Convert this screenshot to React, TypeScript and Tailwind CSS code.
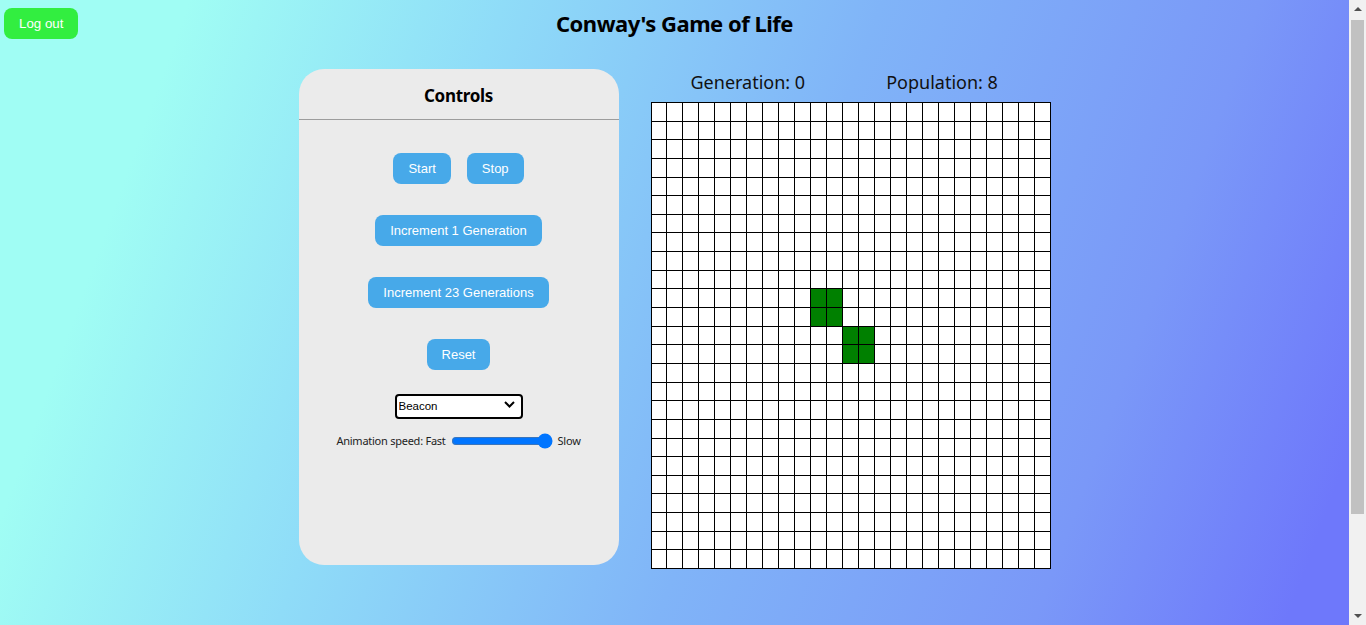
const ALIVE = new Set(["10-10", "10-11", "11-10", "11-11", "12-12", "12-13", "13-12", "13-13"]);
const SIZE = 25;

const ui = "font-['Noto_Sans',sans-serif]";
const btn =
  "font-['Liberation_Sans',Arial,sans-serif] text-[13px] leading-[15px] text-white rounded-lg px-[15px] py-2 bg-[#47a9e9]";

export default function App() {
  return (
    <div className="flex h-[625px] overflow-hidden">
      <div
        className={`flex-1 bg-[linear-gradient(110deg,#a0fdf4_12%,#8fdcf8_32%,#80b4f8_56%,#7a98f8_80%,#6e78fb_96%)] text-black ${ui}`}
      >
        <div className="grid grid-cols-[1fr_auto_1fr] items-start">
          <div>
            <button className="mt-2 ml-1 rounded-lg bg-[#32ee40] px-[15px] py-2 font-['Liberation_Sans',Arial,sans-serif] text-[13.333px] leading-[15px] text-white">
              Log out
            </button>
          </div>
          <h1 className="mt-[7px] text-[22px] font-bold leading-[32px] tracking-[-0.5px]">
            Conway's Game of Life
          </h1>
          <div />
        </div>

        <div className="mt-[30px] flex justify-center gap-8">
          <Controls />
          <Board />
        </div>
      </div>
      <Scrollbar />
    </div>
  );
}

function Controls() {
  return (
    <div className="flex h-[496px] w-[320px] flex-col rounded-[25px] bg-[#ebebeb]">
      <div className="flex h-[50px] items-center justify-center pt-[3px] text-[17px] font-bold tracking-[-0.3px]">
        Controls
      </div>
      <div className="h-px bg-[#9c9c9c]" />

      <div className="mt-[33px] flex flex-col items-center gap-[31px]">
        <div className="flex gap-4">
          <button className={btn}>Start</button>
          <button className={btn}>Stop</button>
        </div>
        <button className={btn}>Increment 1 Generation</button>
        <button className={btn}>Increment 23 Generations</button>
        <button className={btn}>Reset</button>
      </div>

      <div className="mt-[22px] flex justify-center">
        <div className="relative">
          <select
            defaultValue="beacon"
            className="h-[25px] w-[128px] appearance-none rounded-[4px] border-2 border-black bg-white pl-[2px] font-['Liberation_Sans',Arial,sans-serif] text-[11.5px] text-black"
          >
            <option value="beacon">Beacon</option>
            <option value="blinker">Blinker</option>
            <option value="glider">Glider</option>
            <option value="toad">Toad</option>
          </select>
          <svg
            className="pointer-events-none absolute right-[8px] top-[9px]"
            width="11"
            height="7"
            viewBox="0 0 11 7"
          >
            <path d="M1 1l4.5 4.5L10 1" fill="none" stroke="black" strokeWidth="2" />
          </svg>
        </div>
      </div>

      <div className="mt-[14px] flex items-center justify-center gap-[5px] text-[11px] tracking-[-0.25px] text-[#222]">
        <span>Animation speed: Fast</span>
        <input
          type="range"
          min={0}
          max={100}
          defaultValue={100}
          className="h-[16px] w-[102px] accent-[#0075ff]"
        />
        <span>Slow</span>
      </div>
    </div>
  );
}

function Board() {
  const cells = [];
  for (let r = 0; r < SIZE; r++) {
    for (let c = 0; c < SIZE; c++) {
      cells.push(
        <div
          key={`${r}-${c}`}
          className={`border-r border-b border-black ${ALIVE.has(`${r}-${c}`) ? "bg-[#008000]" : "bg-white"}`}
        />
      );
    }
  }

  return (
    <div className="flex flex-col">
      <div className="flex h-[33px] items-start pt-[1px] text-[18px] leading-[24px] text-[#111]">
        <span className="ml-[40px]">Generation: 0</span>
        <span className="ml-[81px]">Population: 8</span>
      </div>
      <div className="grid h-[467px] w-[400px] grid-cols-[repeat(25,minmax(0,1fr))] grid-rows-[repeat(25,minmax(0,1fr))] border-t border-l border-black">
        {cells}
      </div>
    </div>
  );
}

function Scrollbar() {
  return (
    <div className="flex w-[17px] flex-col bg-[#f1f1f1]">
      <div className="flex h-[17px] items-center justify-center">
        <svg width="8" height="5" viewBox="0 0 8 5">
          <path d="M0 5L4 1L8 5Z" fill="#505050" />
        </svg>
      </div>
      <div className="mx-[2px] mt-[3px] h-[494px] bg-[#c1c1c1]" />
      <div className="flex-1" />
      <div className="flex h-[17px] items-center justify-center">
        <svg width="8" height="5" viewBox="0 0 8 5">
          <path d="M0 0L4 4L8 0Z" fill="#505050" />
        </svg>
      </div>
    </div>
  );
}
